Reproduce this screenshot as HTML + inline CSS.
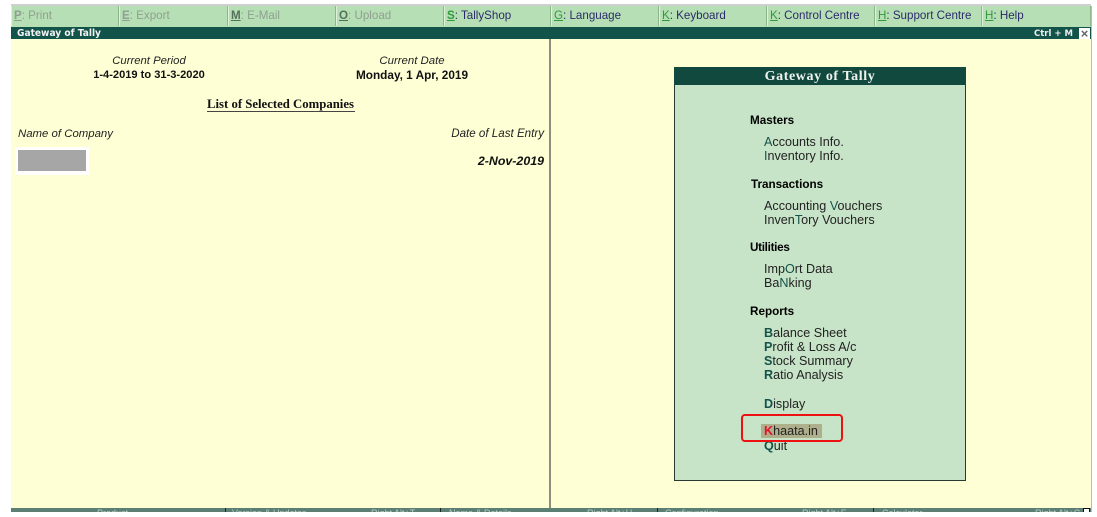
<!DOCTYPE html>
<html>
<head>
<meta charset="utf-8">
<style>
html,body{margin:0;padding:0;background:#fff;}
body{width:1097px;height:517px;position:relative;overflow:hidden;font-family:"Liberation Sans",sans-serif;font-size:12px;color:#222;}
.a{position:absolute;white-space:nowrap;}
.btn{position:absolute;top:6px;height:20px;line-height:20px;font-size:11.6px;color:#2a2a6a;background:#b7dfb5;border-right:1px solid #8fb58d;border-left:1px solid #dff0dd;box-sizing:border-box;padding-left:2px;}
.btn u{color:#2e9a3a;font-weight:normal;}
.btn.off{color:#8f9f8f;}
.btn.off u{color:#8f9f8f;font-weight:bold;}
.btn.m{color:#8f9f8f;}
.btn.m u{color:#55705a;font-weight:bold;}
.h{font-size:11.7px;font-weight:bold;color:#000;left:750px;}
.i{font-size:12.6px;left:764px;color:#222;line-height:14px;}
.i b{color:#14524a;}
.i i{color:#14524a;font-style:normal;}
.f{font-size:9px;color:#b9ccc4;top:509px;height:3px;overflow:hidden;line-height:9px;}
</style>
</head>
<body>
<div class="a" style="left:11px;top:4px;width:1080px;height:2px;background:#cfcfcf"></div>
<div class="a" style="left:11px;top:6px;width:1080px;height:21px;background:#b7dfb5"></div>
<div class="btn off" style="left:11px;width:108px"><u>P</u>: Print</div>
<div class="btn off" style="left:119px;width:109px"><u>E</u>: Export</div>
<div class="btn m" style="left:228px;width:108px"><u><b>M</b></u>: E-Mail</div>
<div class="btn m" style="left:336px;width:108px"><u><b>O</b></u>: Upload</div>
<div class="btn" style="left:444px;width:107px"><u><b>S</b></u>: TallyShop</div>
<div class="btn" style="left:551px;width:108px"><u>G</u>: Language</div>
<div class="btn" style="left:659px;width:108px"><u>K</u>: Keyboard</div>
<div class="btn" style="left:767px;width:108px"><u>K</u>: Control Centre</div>
<div class="btn" style="left:875px;width:107px"><u>H</u>: Support Centre</div>
<div class="btn" style="left:982px;width:109px"><u>H</u>: Help</div>

<div class="a" style="left:11px;top:27px;width:1080px;height:12px;background:#12544a"></div>
<div class="a" style="left:17px;top:28px;height:12px;line-height:12px;font-size:9.5px;font-weight:bold;color:#f2f2f2;font-family:'DejaVu Sans',sans-serif;transform-origin:left;transform:scaleX(.955)">Gateway of Tally</div>
<div class="a" style="left:1034px;top:28px;height:12px;line-height:12px;font-size:8.5px;font-weight:bold;color:#eee;font-family:'DejaVu Sans',sans-serif">Ctrl + M</div>
<div class="a" style="left:1079px;top:28px;width:11px;height:11px;background:#fff;text-align:center;line-height:11px;font-size:13px;font-weight:bold;color:#666">×</div>

<div class="a" style="left:11px;top:39px;width:1080px;height:469px;background:#ffffd6"></div>
<div class="a" style="left:1091px;top:6px;width:1px;height:506px;background:#bbb"></div>
<div class="a" style="left:549px;top:39px;width:2px;height:469px;background:#8e8e80"></div>

<div class="a" style="left:89px;width:120px;text-align:center;top:54px;font-style:italic;font-size:11.3px;line-height:14px">Current Period</div>
<div class="a" style="left:89px;width:120px;text-align:center;top:68px;font-weight:bold;font-size:11.1px;line-height:14px;color:#111">1-4-2019 to 31-3-2020</div>
<div class="a" style="left:352px;width:120px;text-align:center;top:54px;font-style:italic;font-size:11.4px;line-height:14px">Current Date</div>
<div class="a" style="left:352px;width:120px;text-align:center;top:68px;font-weight:bold;font-size:11.8px;line-height:14px;color:#111">Monday, 1 Apr, 2019</div>
<div class="a" style="left:207px;top:97px;font-family:'Liberation Serif',serif;font-weight:bold;font-size:12.75px;line-height:14px;color:#111">List of Selected Companies</div>
<div class="a" style="left:207px;top:111px;width:148px;height:1px;background:#444"></div>
<div class="a" style="left:18px;top:127px;font-style:italic;font-size:11.4px;line-height:14px">Name of Company</div>
<div class="a" style="right:553px;top:127px;font-style:italic;font-size:11.6px;line-height:14px">Date of Last Entry</div>
<div class="a" style="right:553px;top:154px;font-style:italic;font-weight:bold;font-size:12.4px;line-height:14px;color:#111">2-Nov-2019</div>
<div class="a" style="left:15px;top:147px;width:74px;height:28px;background:#fff"></div>
<div class="a" style="left:18px;top:150px;width:68px;height:21px;background:#a6a6a6"></div>

<div class="a" style="left:674px;top:67px;width:292px;height:414px;box-sizing:border-box;border:1px solid #2a3a33;background:#c8e4c8"></div>
<div class="a" style="left:674px;top:67px;width:292px;height:18px;background:#12493f;color:#eef3ee;text-align:center;line-height:19px;font-family:'Liberation Serif',serif;font-weight:bold;font-size:14px;letter-spacing:.6px">Gateway of Tally</div>

<div class="a h" style="top:114px">Masters</div>
<div class="a i" style="top:135px"><i>A</i>ccounts Info.</div>
<div class="a i" style="top:149px"><i>I</i>nventory Info.</div>
<div class="a h" style="top:178px;left:751px">Transactions</div>
<div class="a i" style="top:199px">Accounting <i>V</i>ouchers</div>
<div class="a i" style="top:213px">Inven<i>T</i>ory Vouchers</div>
<div class="a h" style="top:241px;letter-spacing:-.3px">Utilities</div>
<div class="a i" style="top:262px">Imp<i>O</i>rt Data</div>
<div class="a i" style="top:276px">Ba<i>N</i>king</div>
<div class="a h" style="top:305px">Reports</div>
<div class="a i" style="top:326px"><b>B</b>alance Sheet</div>
<div class="a i" style="top:340px"><b>P</b>rofit &amp; Loss A/c</div>
<div class="a i" style="top:354px"><b>S</b>tock Summary</div>
<div class="a i" style="top:368px"><b>R</b>atio Analysis</div>
<div class="a i" style="top:397px"><b>D</b>isplay</div>
<div class="a" style="left:761px;top:424px;width:61px;height:14px;background:#aeb08c"></div>
<div class="a i" style="top:424px"><b style="color:#e8102a">K</b>haata.in</div>
<div class="a i" style="top:439px"><b>Q</b>uit</div>
<div class="a" style="left:741px;top:414px;width:102px;height:28px;box-sizing:border-box;border:2px solid #ee1111;border-radius:4px"></div>

<div class="a" style="left:11px;top:508px;width:1080px;height:4px;background:#5b8073"></div>
<div class="a" style="left:225px;top:508px;width:1px;height:4px;background:#222"></div>
<div class="a" style="left:440px;top:508px;width:1px;height:4px;background:#222"></div>
<div class="a" style="left:657px;top:508px;width:1px;height:4px;background:#222"></div>
<div class="a" style="left:873px;top:508px;width:1px;height:4px;background:#222"></div>
<div class="a f" style="left:97px">Product</div>
<div class="a f" style="left:232px">Version &amp; Updates</div>
<div class="a f" style="left:371px">Right Alt+T</div>
<div class="a f" style="left:449px">Name &amp; Details</div>
<div class="a f" style="left:587px">Right Alt+U</div>
<div class="a f" style="left:665px">Configuration</div>
<div class="a f" style="left:802px">Right Alt+F</div>
<div class="a f" style="left:882px">Calculator</div>
<div class="a f" style="left:1035px">Right Alt+C</div>
<div class="a" style="left:1083px;top:508px;width:7px;height:4px;background:#fff;border:1px solid #111;border-bottom:0;box-sizing:border-box"></div>
</body>
</html>
